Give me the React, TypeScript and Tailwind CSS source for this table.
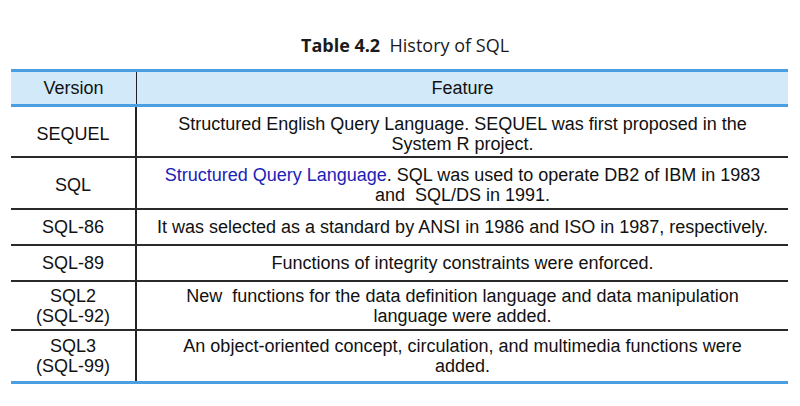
import type { ReactNode } from "react";

type Row = {
  version: ReactNode;
  feature: ReactNode;
  h: string;
};

const rows: Row[] = [
  {
    version: "SEQUEL",
    feature: (
      <>
        Structured English Query Language. SEQUEL was first proposed in the
        <br />
        System R project.
      </>
    ),
    h: "h-[51px]",
  },
  {
    version: "SQL",
    feature: (
      <>
        <span className="text-[#1c22b8]">Structured Query Language</span>. SQL was used to operate DB2 of IBM in 1983
        <br />
        and&nbsp; SQL/DS in 1991.
      </>
    ),
    h: "h-[52px]",
  },
  {
    version: "SQL-86",
    feature: "It was selected as a standard by ANSI in 1986 and ISO in 1987, respectively.",
    h: "h-[36px]",
  },
  {
    version: "SQL-89",
    feature: "Functions of integrity constraints were enforced.",
    h: "h-[36px]",
  },
  {
    version: (
      <>
        SQL2
        <br />
        (SQL-92)
      </>
    ),
    feature: (
      <>
        New&nbsp; functions for the data definition language and data manipulation
        <br />
        language were added.
      </>
    ),
    h: "h-[49px]",
  },
  {
    version: (
      <>
        SQL3
        <br />
        (SQL-99)
      </>
    ),
    feature: (
      <>
        An object-oriented concept, circulation, and multimedia functions were
        <br />
        added.
      </>
    ),
    h: "h-[53px]",
  },
];

export default function App() {
  return (
    <div className="w-[800px] h-[406px] bg-white overflow-hidden">
      {/* Caption */}
      <div className="h-[69px] pt-[33px] pl-[10px] text-center text-[18px] leading-[24px] text-[#1a1a1a] font-['Open_Sans',sans-serif]">
        <span className="font-bold">Table 4.2</span>&nbsp;&nbsp;History of SQL
      </div>

      {/* Table */}
      <div className="mx-[11px] w-[777px] font-['Liberation_Sans',Arial,sans-serif] text-[18px] leading-[20px] text-[#111]">
        <div className="flex h-[38px] bg-[#d2e9fa] border-t-[3px] border-b-[3px] border-[#4a9fe2]">
          <div className="w-[126px] flex items-center justify-center border-r border-[#222]">Version</div>
          <div className="flex-1 flex items-center justify-center">Feature</div>
        </div>
        {rows.map((r, i) => (
          <div
            key={i}
            className={`flex ${r.h} ${
              i === rows.length - 1 ? "border-b-[3px] border-[#4a9fe2]" : "border-b-2 border-[#2a2a2a]"
            }`}
          >
            <div className="w-[126px] flex items-center justify-center text-center border-r-2 border-[#222]">
              <div className={i < 2 ? "pt-[4px]" : ""}>{r.version}</div>
            </div>
            <div className="flex-1 flex items-center justify-center text-center">
              <div className={i < 2 ? "pt-[4px]" : ""}>{r.feature}</div>
            </div>
          </div>
        ))}
      </div>
    </div>
  );
}
